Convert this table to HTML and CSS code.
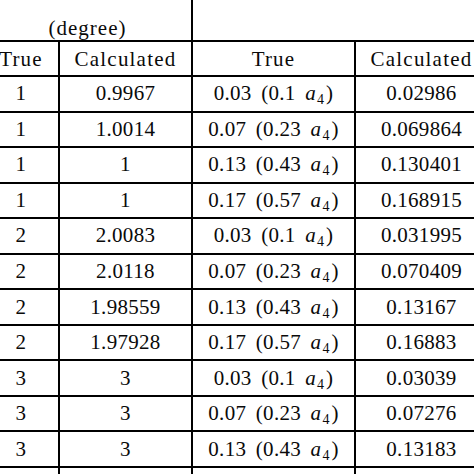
FILE: index.html
```html
<!DOCTYPE html>
<html>
<head>
<meta charset="utf-8">
<link rel="stylesheet" href="styles.css">
</head>
<body>
<div class="table">
  <div class="cell top span2 sep"><span>(degree)</span></div>
  <div class="cell top span2"></div>

  <div class="cell head sep"><span>True</span></div>
  <div class="cell head sep"><span>Calculated</span></div>
  <div class="cell head sep"><span>True</span></div>
  <div class="cell head"><span>Calculated</span></div>

  <div class="cell sep"><span>1</span></div><div class="cell sep"><span>0.9967</span></div><div class="cell sep"><span>0.03 (0.1 <i>a</i><sub>4</sub>)</span></div><div class="cell"><span>0.02986</span></div>
  <div class="cell sep"><span>1</span></div><div class="cell sep"><span>1.0014</span></div><div class="cell sep"><span>0.07 (0.23 <i>a</i><sub>4</sub>)</span></div><div class="cell"><span>0.069864</span></div>
  <div class="cell sep"><span>1</span></div><div class="cell sep"><span>1</span></div><div class="cell sep"><span>0.13 (0.43 <i>a</i><sub>4</sub>)</span></div><div class="cell"><span>0.130401</span></div>
  <div class="cell sep"><span>1</span></div><div class="cell sep"><span>1</span></div><div class="cell sep"><span>0.17 (0.57 <i>a</i><sub>4</sub>)</span></div><div class="cell"><span>0.168915</span></div>
  <div class="cell sep"><span>2</span></div><div class="cell sep"><span>2.0083</span></div><div class="cell sep"><span>0.03 (0.1 <i>a</i><sub>4</sub>)</span></div><div class="cell"><span>0.031995</span></div>
  <div class="cell sep"><span>2</span></div><div class="cell sep"><span>2.0118</span></div><div class="cell sep"><span>0.07 (0.23 <i>a</i><sub>4</sub>)</span></div><div class="cell"><span>0.070409</span></div>
  <div class="cell sep"><span>2</span></div><div class="cell sep"><span>1.98559</span></div><div class="cell sep"><span>0.13 (0.43 <i>a</i><sub>4</sub>)</span></div><div class="cell"><span>0.13167</span></div>
  <div class="cell sep"><span>2</span></div><div class="cell sep"><span>1.97928</span></div><div class="cell sep"><span>0.17 (0.57 <i>a</i><sub>4</sub>)</span></div><div class="cell"><span>0.16883</span></div>
  <div class="cell sep"><span>3</span></div><div class="cell sep"><span>3</span></div><div class="cell sep"><span>0.03 (0.1 <i>a</i><sub>4</sub>)</span></div><div class="cell"><span>0.03039</span></div>
  <div class="cell sep"><span>3</span></div><div class="cell sep"><span>3</span></div><div class="cell sep"><span>0.07 (0.23 <i>a</i><sub>4</sub>)</span></div><div class="cell"><span>0.07276</span></div>
  <div class="cell sep"><span>3</span></div><div class="cell sep"><span>3</span></div><div class="cell sep"><span>0.13 (0.43 <i>a</i><sub>4</sub>)</span></div><div class="cell"><span>0.13183</span></div>
  <div class="cell sep"></div><div class="cell sep"></div><div class="cell sep"></div><div class="cell"></div>
</div>
</body>
</html>
```

FILE: styles.css
```css
html, body {
  margin: 0;
  padding: 0;
  background: #ffffff;
  width: 474px;
  height: 474px;
  overflow: hidden;
}

.table {
  margin-left: -16px;
  display: grid;
  grid-template-columns: 76px 133px 163px 131px;
  grid-template-rows: 42px 35px repeat(12, 35.55px);
  font-family: "Liberation Serif", "Times New Roman", serif;
  font-size: 21px;
  color: #0a0a0a;
  letter-spacing: 0.3px;
  word-spacing: 4px;
}

.cell {
  box-sizing: border-box;
  border-bottom: 2px solid #000000;
  display: flex;
  align-items: center;
  justify-content: center;
  white-space: nowrap;
  line-height: 1;
}

.sep {
  border-right: 2px solid #000000;
}

.span2 {
  grid-column: span 2;
}

.top {
  padding-top: 16px;
  letter-spacing: 1px;
}

.head {
  letter-spacing: 1.2px;
  padding-top: 1px;
}

.cell i {
  font-style: italic;
}

.cell sub {
  font-size: 14px;
  vertical-align: -4px;
  line-height: 0;
  letter-spacing: 0;
  margin-left: 1px;
  margin-right: 2px;
}
```
